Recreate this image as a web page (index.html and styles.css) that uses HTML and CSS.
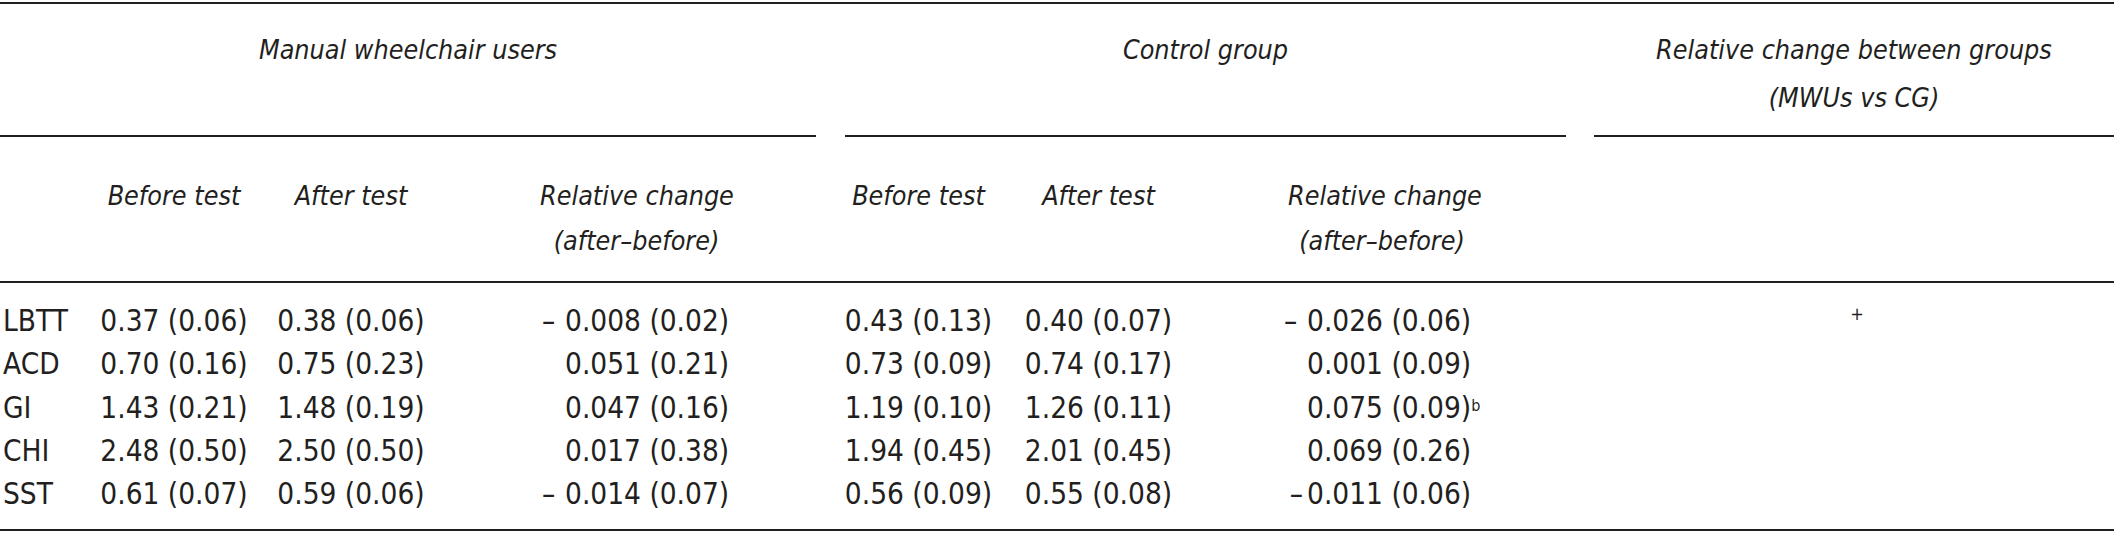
FILE: index.html
```html
<!DOCTYPE html>
<html lang="en">
<head>
<meta charset="utf-8">
<title>Table</title>
<link rel="stylesheet" href="styles.css">
</head>
<body>
<div class="table">
  <div class="row head1">
    <div class="grp g1">Manual wheelchair users</div>
    <div class="grp g2">Control group</div>
    <div class="grp g3">Relative change between groups<br>(MWUs vs CG)</div>
  </div>
  <div class="row head2">
    <div class="hc"></div>
    <div class="hc">Before test</div>
    <div class="hc">After test</div>
    <div class="hc rel1">Relative change<br>(after–before)</div>
    <div class="hc">Before test</div>
    <div class="hc">After test</div>
    <div class="hc rel2">Relative change<br>(after–before)</div>
    <div class="hc"></div>
  </div>
  <div class="body">
    <div class="row">
      <div class="lbl">LBTT</div>
      <div class="num">0.37 (0.06)</div>
      <div class="num">0.38 (0.06)</div>
      <div class="chg c1"><span class="sign">– </span>0.008 (0.02)</div>
      <div class="num">0.43 (0.13)</div>
      <div class="num">0.40 (0.07)</div>
      <div class="chg c2"><span class="sign">– </span>0.026 (0.06)</div>
      <div class="btw"><sup class="plus">+</sup></div>
    </div>
    <div class="row">
      <div class="lbl">ACD</div>
      <div class="num">0.70 (0.16)</div>
      <div class="num">0.75 (0.23)</div>
      <div class="chg c1"><span class="sign"></span>0.051 (0.21)</div>
      <div class="num">0.73 (0.09)</div>
      <div class="num">0.74 (0.17)</div>
      <div class="chg c2"><span class="sign"></span>0.001 (0.09)</div>
      <div class="btw"></div>
    </div>
    <div class="row">
      <div class="lbl">GI</div>
      <div class="num">1.43 (0.21)</div>
      <div class="num">1.48 (0.19)</div>
      <div class="chg c1"><span class="sign"></span>0.047 (0.16)</div>
      <div class="num">1.19 (0.10)</div>
      <div class="num">1.26 (0.11)</div>
      <div class="chg c2"><span class="sign"></span>0.075 (0.09)<sup class="note">b</sup></div>
      <div class="btw"></div>
    </div>
    <div class="row">
      <div class="lbl">CHI</div>
      <div class="num">2.48 (0.50)</div>
      <div class="num">2.50 (0.50)</div>
      <div class="chg c1"><span class="sign"></span>0.017 (0.38)</div>
      <div class="num">1.94 (0.45)</div>
      <div class="num">2.01 (0.45)</div>
      <div class="chg c2"><span class="sign"></span>0.069 (0.26)</div>
      <div class="btw"></div>
    </div>
    <div class="row">
      <div class="lbl">SST</div>
      <div class="num">0.61 (0.07)</div>
      <div class="num">0.59 (0.06)</div>
      <div class="chg c1"><span class="sign">– </span>0.014 (0.07)</div>
      <div class="num">0.56 (0.09)</div>
      <div class="num">0.55 (0.08)</div>
      <div class="chg c2"><span class="sign tight">–</span>0.011 (0.06)</div>
      <div class="btw"></div>
    </div>
  </div>
</div>
</body>
</html>
```
FILE: styles.css
```css
* {
  box-sizing: border-box;
  margin: 0;
  padding: 0;
}

html,
body {
  background: #ffffff;
}

body {
  margin: 0;
  font-family: "DejaVu Sans Condensed", "DejaVu Sans", sans-serif;
  font-stretch: condensed;
  color: #231f20;
}

.table {
  width: 2114px;
  margin-top: 2px;
  border-top: 2px solid #231f20;
  border-bottom: 2px solid #231f20;
}

.row {
  display: grid;
  grid-template-columns: 86px 176px 178px 390px 177px 183px 390px 534px;
}

/* first header row: spanning group titles */
.head1 .grp {
  font-style: italic;
  font-size: 26.7px;
  line-height: 48px;
  text-align: center;
  white-space: nowrap;
  padding: 22px 0 13px;
  border-bottom: 2px solid #231f20;
}

.g1 {
  grid-column: 1 / 5;
  margin-right: 14px;
}

.g2 {
  grid-column: 5 / 8;
  margin-left: 15px;
  margin-right: 14px;
}

.g3 {
  grid-column: 8 / 9;
  margin-left: 14px;
}

/* second header row */
.head2 {
  border-bottom: 2px solid #231f20;
}

.hc {
  font-style: italic;
  font-size: 26.7px;
  line-height: 45px;
  text-align: center;
  white-space: nowrap;
  padding: 36px 0 18px;
}

.hc.rel1 {
  padding-left: 100px;
  padding-right: 97px;
}

.hc.rel2 {
  padding-left: 98px;
  padding-right: 104px;
}

/* body */
.body {
  padding: 17px 0 13px;
}

.body .row > div {
  font-size: 29.5px;
  line-height: 43.25px;
  white-space: nowrap;
}

.lbl {
  padding-left: 3px;
}

.num {
  text-align: center;
}

.chg.c1 {
  padding-left: 102px;
}

.chg.c2 {
  padding-left: 94px;
}

.sign {
  display: inline-block;
  width: 23px;
  text-align: left;
  white-space: pre;
}

.sign.tight {
  text-align: right;
  padding-right: 4px;
}

.btw {
  text-align: center;
  padding-left: 20px;
}

.plus {
  font-size: 18px;
  line-height: 0;
  vertical-align: 11px;
  font-weight: normal;
}

.note {
  font-size: 16px;
  line-height: 0;
  vertical-align: 7px;
}
```
